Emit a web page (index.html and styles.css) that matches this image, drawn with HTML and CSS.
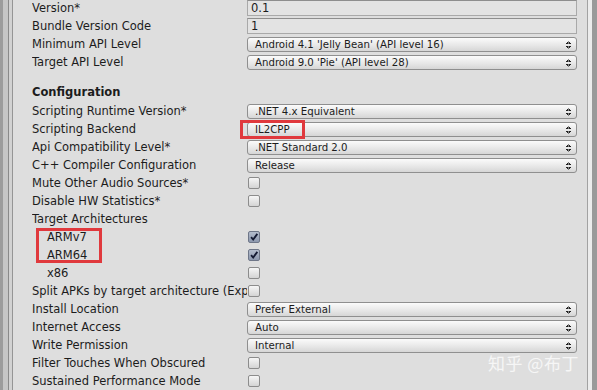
FILE: index.html
```html
<!DOCTYPE html>
<html>
<head>
    <title>Player Settings</title>
    <link rel="stylesheet" href="styles.css">
</head>
<body>
    <div class="window">
        <div class="gutter-left">
            <div class="strip strip-a"></div>
            <div class="strip strip-b"></div>
            <div class="strip strip-c"></div>
            <div class="strip strip-d"></div>
            <div class="strip strip-e"></div>
        </div>

        <div class="inspector">
            <div class="row">
                <span class="label">Version*</span>
                <div class="textfield">0.1</div>
            </div>
            <div class="row">
                <span class="label">Bundle Version Code</span>
                <div class="textfield">1</div>
            </div>
            <div class="row">
                <span class="label">Minimum API Level</span>
                <div class="popup">Android 4.1 'Jelly Bean' (API level 16)</div>
            </div>
            <div class="row">
                <span class="label">Target API Level</span>
                <div class="popup">Android 9.0 'Pie' (API level 28)</div>
            </div>

            <div class="row header">
                <span class="label">Configuration</span>
            </div>

            <div class="row">
                <span class="label">Scripting Runtime Version*</span>
                <div class="popup">.NET 4.x Equivalent</div>
            </div>
            <div class="row">
                <span class="label">Scripting Backend</span>
                <div class="popup">IL2CPP</div>
                <div class="mark mark-backend"></div>
            </div>
            <div class="row">
                <span class="label">Api Compatibility Level*</span>
                <div class="popup">.NET Standard 2.0</div>
            </div>
            <div class="row">
                <span class="label">C++ Compiler Configuration</span>
                <div class="popup">Release</div>
            </div>
            <div class="row">
                <span class="label">Mute Other Audio Sources*</span>
                <span class="check"></span>
            </div>
            <div class="row">
                <span class="label">Disable HW Statistics*</span>
                <span class="check"></span>
            </div>
            <div class="row">
                <span class="label">Target Architectures</span>
            </div>
            <div class="row">
                <span class="label sub">ARMv7</span>
                <span class="check on"><svg viewBox="0 0 12 12"><path d="M2.5 6.2 L5 9 L10 2.2" /></svg></span>
                <div class="mark mark-arch"></div>
            </div>
            <div class="row">
                <span class="label sub">ARM64</span>
                <span class="check on"><svg viewBox="0 0 12 12"><path d="M2.5 6.2 L5 9 L10 2.2" /></svg></span>
            </div>
            <div class="row">
                <span class="label sub">x86</span>
                <span class="check"></span>
            </div>
            <div class="row">
                <span class="label">Split APKs by target architecture (Experimental)</span>
                <span class="check"></span>
            </div>
            <div class="row">
                <span class="label">Install Location</span>
                <div class="popup">Prefer External</div>
            </div>
            <div class="row">
                <span class="label">Internet Access</span>
                <div class="popup">Auto</div>
            </div>
            <div class="row">
                <span class="label">Write Permission</span>
                <div class="popup">Internal</div>
            </div>
            <div class="row">
                <span class="label">Filter Touches When Obscured</span>
                <span class="check"></span>
            </div>
            <div class="row">
                <span class="label">Sustained Performance Mode</span>
                <span class="check"></span>
            </div>
        </div>

        <div class="gutter-right">
            <div class="strip strip-f"></div>
            <div class="strip strip-g"></div>
            <div class="strip strip-h"></div>
        </div>

        <div class="watermark">知乎 @布丁</div>
    </div>
</body>
</html>
```

FILE: styles.css
```css
body {
    margin: 0;
    padding: 0;
    background-color: #dedede;
    font-family: "DejaVu Sans", Verdana, sans-serif;
    font-size: 11.5px;
    color: #1c1c1c;
}

.window {
    position: relative;
    display: flex;
    width: 597px;
    height: 390px;
    overflow: hidden;
}

/* left and right window edges */
.gutter-left, .gutter-right {
    display: flex;
    flex-shrink: 0;
}

.strip {
    height: 100%;
}

.strip-a { width: 3px; background-color: #9c9c9c; }
.strip-b { width: 5px; background-color: #c6c6c6; }
.strip-c { width: 1px; background-color: #8a8a8a; }
.strip-d { width: 3px; background-color: #d2d2d2; }
.strip-e { width: 1px; background-color: #959595; }

.strip-f { width: 1px; background-color: #a2a2a2; }
.strip-g { width: 4px; background-color: #ececec; }
.strip-h { width: 5px; background-color: #9a9a9a; }

.inspector {
    flex: 1;
    padding: 0 10px 0 19px;
    margin-top: -1px;
}

.row {
    position: relative;
    display: flex;
    align-items: center;
    height: 18px;
}

.label {
    width: 215px;
    flex-shrink: 0;
    white-space: nowrap;
    overflow: hidden;
}

.label.sub {
    padding-left: 15px;
    width: 200px;
}

.header {
    margin-top: 12px;
    margin-bottom: 1px;
}

.header .label {
    font-weight: bold;
}

.textfield {
    flex: 1;
    height: 14px;
    line-height: 14px;
    padding-left: 3px;
    background-color: #e3e3e3;
    border: 1px solid #a9a9a9;
    border-top-color: #8e8e8e;
}

.popup {
    flex: 1;
    position: relative;
    height: 13px;
    line-height: 13px;
    padding-left: 7px;
    font-size: 10.2px;
    border: 1px solid #8f8f8f;
    border-radius: 3px;
    background: linear-gradient(#fbfbfb, #e6e6e6 60%, #d6d6d6);
}

.popup::after {
    content: "";
    position: absolute;
    right: 5px;
    top: 3px;
    width: 5px;
    height: 8px;
    background:
        linear-gradient(to bottom right, transparent 50%, #222 50%) left top / 50% 3px no-repeat,
        linear-gradient(to bottom left, transparent 50%, #222 50%) right top / 50% 3px no-repeat,
        linear-gradient(to top right, transparent 50%, #222 50%) left bottom / 50% 3px no-repeat,
        linear-gradient(to top left, transparent 50%, #222 50%) right bottom / 50% 3px no-repeat;
}

.check {
    width: 10px;
    height: 10px;
    margin-left: 1px;
    border: 1px solid #8c8c8c;
    border-radius: 2px;
    background: linear-gradient(#f6f6f6, #d4d4d4);
}

.check.on {
    background: linear-gradient(#b3bccc, #8d98ae);
    border-color: #6e7688;
}

.check svg {
    display: block;
    width: 10px;
    height: 10px;
    fill: none;
    stroke: #141a33;
    stroke-width: 2.2;
}

/* red highlight boxes over the screenshot */
.mark {
    position: absolute;
    border: 3px solid #e0393d;
}

.mark-backend {
    left: 208px;
    top: 0;
    width: 59px;
    height: 13px;
}

.mark-arch {
    left: 4px;
    top: 0;
    width: 60px;
    height: 29px;
}

.watermark {
    position: absolute;
    left: 488px;
    top: 350px;
    font-family: "Noto Sans CJK SC", sans-serif;
    font-size: 17px;
    color: rgba(255, 255, 255, 0.75);
    letter-spacing: 0.5px;
}
```
